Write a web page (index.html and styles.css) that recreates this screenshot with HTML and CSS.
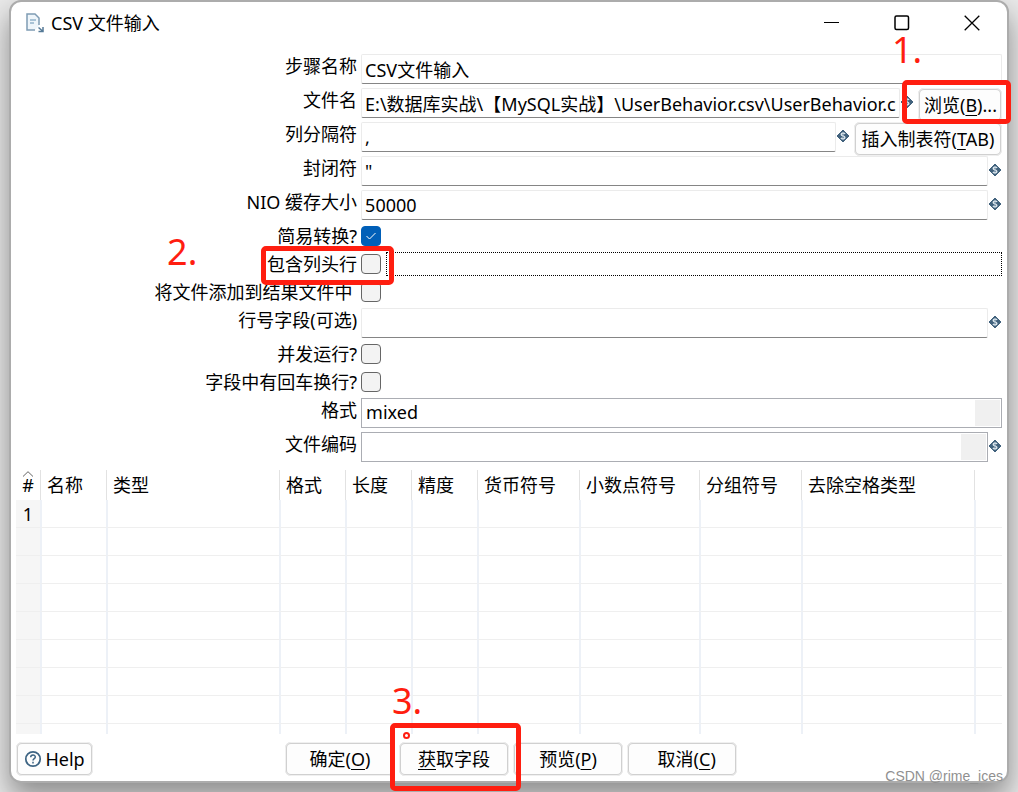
FILE: index.html
```html
<!DOCTYPE html>
<html lang="zh-CN">
<head>
    <meta charset="UTF-8">
    <meta name="viewport" content="width=device-width, initial-scale=1.0">
    <title>CSV 文件输入</title>
    <link rel="stylesheet" href="styles.css">
</head>
<body>
    <svg class="symbols" aria-hidden="true">
        <symbol id="variable" viewBox="0 0 12 12">
            <path d="M6 0 L12 6 L6 12 L0 6 Z" fill="#41627d" stroke="#41627d" stroke-width="1"/>
            <path d="M8 4 C7.400 3 4.200 2.900 4.200 4.600 C4.200 6.200 7.900 5.600 7.900 7.400 C7.900 9.100 4.600 9 4 7.900" fill="none" stroke="#dce6ed" stroke-width="1.400"/>
            <path d="M6 2 V10" stroke="#b4c6d3" stroke-width="1"/>
        </symbol>
    </svg>

    <div class="window">
        <div class="title-bar">
            <svg class="title-icon" width="18" height="20" viewBox="0 0 18 20">
                <path d="M1 1 H9 L13 5 V13 L9 17 H1 Z" fill="#eef5fa"/>
                <path d="M13 12 V5 L9 1 H1 V17 H9" fill="none" stroke="#7f9cb4" stroke-width="1.500"/>
                <path d="M4 7 H10 M4 10 H8" stroke="#a9c3d6" stroke-width="2"/>
                <path d="M12.500 14.500 L16.500 18 M17 14 V18.500 H12.500" fill="none" stroke="#557a97" stroke-width="1.500"/>
            </svg>
            <h1>CSV 文件输入</h1>
            <div class="window-controls">
                <button type="button" aria-label="最小化">
                    <svg width="16" height="16" viewBox="0 0 16 16"><path d="M0 7.500 H15"/></svg>
                </button>
                <button type="button" aria-label="最大化">
                    <svg width="16" height="16" viewBox="0 0 16 16"><rect x="1" y="1" width="13.500" height="13.500" rx="1.500" stroke-width="1.500"/></svg>
                </button>
                <button type="button" aria-label="关闭">
                    <svg width="16" height="16" viewBox="0 0 16 16"><path d="M.7 .7 L15.300 15.300 M15.300 .7 L.7 15.300" stroke-width="1.300"/></svg>
                </button>
            </div>
        </div>

        <form class="form">
            <div class="row">
                <label for="stepName">步骤名称</label>
                <div class="field">
                    <input type="text" id="stepName" value="CSV文件输入">
                </div>
            </div>
            <div class="row">
                <label for="fileName">文件名</label>
                <div class="field">
                    <input type="text" id="fileName" value="E:\数据库实战\【MySQL实战】\UserBehavior.csv\UserBehavior.csv">
                    <svg class="variable"><use href="#variable"/></svg>
                    <div class="marked">
                        <button type="button" class="button browse">浏览(<u>B</u>)...</button>
                        <span class="mark mark-browse"></span>
                        <span class="mark-number number-browse">1.</span>
                    </div>
                </div>
            </div>
            <div class="row">
                <label for="delimiter">列分隔符</label>
                <div class="field">
                    <input type="text" id="delimiter" value=",">
                    <svg class="variable"><use href="#variable"/></svg>
                    <button type="button" class="button insert-tab">插入制表符(<u>T</u>AB)</button>
                </div>
            </div>
            <div class="row">
                <label for="enclosure">封闭符</label>
                <div class="field">
                    <input type="text" id="enclosure" value="&quot;">
                    <svg class="variable"><use href="#variable"/></svg>
                </div>
            </div>
            <div class="row">
                <label for="bufferSize">NIO 缓存大小</label>
                <div class="field">
                    <input type="text" id="bufferSize" value="50000">
                    <svg class="variable"><use href="#variable"/></svg>
                </div>
            </div>
            <div class="row check-row">
                <label for="lazyConversion">简易转换?</label>
                <div class="field">
                    <input type="checkbox" id="lazyConversion" checked>
                </div>
            </div>
            <div class="row check-row">
                <label for="headerRow">包含列头行</label>
                <div class="field marked">
                    <input type="checkbox" id="headerRow">
                    <span class="focus-area"></span>
                    <span class="mark mark-header"></span>
                    <span class="mark-number number-header">2.</span>
                </div>
            </div>
            <div class="row check-row">
                <label for="addResult">将文件添加到结果文件中&nbsp;</label>
                <div class="field">
                    <input type="checkbox" id="addResult">
                </div>
            </div>
            <div class="row">
                <label for="rowNumField">行号字段(可选)</label>
                <div class="field">
                    <input type="text" id="rowNumField">
                    <svg class="variable"><use href="#variable"/></svg>
                </div>
            </div>
            <div class="row check-row">
                <label for="parallel">并发运行?</label>
                <div class="field">
                    <input type="checkbox" id="parallel">
                </div>
            </div>
            <div class="row check-row">
                <label for="newlines">字段中有回车换行?</label>
                <div class="field">
                    <input type="checkbox" id="newlines">
                </div>
            </div>
            <div class="row">
                <label for="format">格式</label>
                <div class="field">
                    <select id="format">
                        <option>mixed</option>
                        <option>DOS</option>
                        <option>Unix</option>
                    </select>
                </div>
            </div>
            <div class="row">
                <label for="encoding">文件编码</label>
                <div class="field">
                    <select id="encoding">
                        <option></option>
                        <option>UTF-8</option>
                        <option>GBK</option>
                    </select>
                    <svg class="variable"><use href="#variable"/></svg>
                </div>
            </div>
        </form>

        <table class="fields-table">
            <colgroup>
                <col class="col-index">
                <col class="col-small">
                <col class="col-large">
                <col class="col-small">
                <col class="col-small">
                <col class="col-small">
                <col class="col-medium">
                <col class="col-decimal">
                <col class="col-medium">
                <col class="col-large">
                <col>
            </colgroup>
            <thead>
                <tr>
                    <th class="index">
                        <svg class="sort" width="12" height="6" viewBox="0 0 12 6"><path d="M1 5.500 L6 .7 L11 5.500" fill="none" stroke="#666"/></svg>#</th>
                    <th>名称</th>
                    <th>类型</th>
                    <th>格式</th>
                    <th>长度</th>
                    <th>精度</th>
                    <th>货币符号</th>
                    <th>小数点符号</th>
                    <th>分组符号</th>
                    <th>去除空格类型</th>
                    <th></th>
                </tr>
            </thead>
            <tbody>
                <tr><td class="index">1</td><td></td><td></td><td></td><td></td><td></td><td></td><td></td><td></td><td></td><td></td></tr>
                <tr><td class="index"></td><td></td><td></td><td></td><td></td><td></td><td></td><td></td><td></td><td></td><td></td></tr>
                <tr><td class="index"></td><td></td><td></td><td></td><td></td><td></td><td></td><td></td><td></td><td></td><td></td></tr>
                <tr><td class="index"></td><td></td><td></td><td></td><td></td><td></td><td></td><td></td><td></td><td></td><td></td></tr>
                <tr><td class="index"></td><td></td><td></td><td></td><td></td><td></td><td></td><td></td><td></td><td></td><td></td></tr>
                <tr><td class="index"></td><td></td><td></td><td></td><td></td><td></td><td></td><td></td><td></td><td></td><td></td></tr>
                <tr><td class="index"></td><td></td><td></td><td></td><td></td><td></td><td></td><td></td><td></td><td></td><td></td></tr>
                <tr><td class="index"></td><td></td><td></td><td></td><td></td><td></td><td></td><td></td><td></td><td></td><td></td></tr>
                <tr class="last"><td class="index"></td><td></td><td></td><td></td><td></td><td></td><td></td><td></td><td></td><td></td><td></td></tr>
            </tbody>
        </table>

        <div class="footer">
            <button type="button" class="button help">
                <svg width="18" height="18" viewBox="0 0 18 18">
                    <circle cx="9" cy="9" r="7.200" fill="none" stroke="#3d6483" stroke-width="1.700"/>
                    <path d="M6.700 7.200 C6.700 4.200 11.300 4.300 11.300 7 C11.300 8.700 9 8.600 9 10.500 M9 11.800 V13.400" fill="none" stroke="#3d6483" stroke-width="1.500"/>
                </svg>
                Help
            </button>
            <div class="actions">
                <button type="button" class="button">确定(<u>O</u>)</button>
                <div class="marked">
                    <button type="button" class="button"><u>获</u>取字段</button>
                    <span class="mark mark-fields"></span>
                    <span class="mark-dot"></span>
                    <span class="mark-number number-fields">3.</span>
                </div>
                <button type="button" class="button">预览(<u>P</u>)</button>
                <button type="button" class="button">&nbsp;&nbsp;取消(<u>C</u>)</button>
            </div>
        </div>
        <span class="watermark">CSDN @rime_ices</span>
    </div>
</body>
</html>
```

FILE: styles.css
```css
* {
    box-sizing: border-box;
}
body {
    margin: 0;
    padding: 0 9px 9px;
    background-color: #e9e9e9;
    color: #000;
    font-family: "Noto Sans", "Noto Sans CJK SC", sans-serif;
    font-size: 18px;
    line-height: 24px;
    overflow: hidden;
}
input, select, button {
    font: inherit;
    color: inherit;
}
.symbols {
    display: none;
}
.window {
    position: relative;
    background-color: #fff;
    border: 2px solid #acacac;
    border-radius: 12px;
    box-shadow: 0 14px 28px rgba(0,0,0,0.4);
}

/* title bar */
.title-bar {
    display: flex;
    align-items: center;
    height: 42px;
    padding-left: 15px;
}
.title-bar h1 {
    flex: 1;
    margin: 0 0 0 7px;
    font-size: 18px;
    font-weight: normal;
}
.window-controls {
    display: flex;
}
.window-controls button {
    display: flex;
    align-items: center;
    justify-content: center;
    width: 70px;
    height: 42px;
    padding: 0;
    border: none;
    background: none;
}
.window-controls svg {
    fill: none;
    stroke: #000;
}

/* form */
.form {
    display: flex;
    flex-direction: column;
    gap: 4px;
    padding: 10px 5px 0;
}
.row {
    display: grid;
    grid-template-columns: calc(35% - 4px) 1fr;
    gap: 4px;
    height: 30px;
}
.row label {
    text-align: right;
    white-space: nowrap;
}
.check-row {
    height: 24px;
}
.field {
    display: flex;
    align-items: flex-start;
    min-width: 0;
}
.check-row .field {
    align-items: center;
}
.field input[type="text"] {
    flex: 1;
    min-width: 0;
    height: 30px;
    padding: 0 3px;
    border: 1px solid #ebebeb;
    border-bottom-color: #858585;
    border-radius: 2px;
    background-color: #fff;
}
.field input[type="checkbox"] {
    appearance: none;
    width: 20px;
    height: 20px;
    margin: 0;
    border: 1px solid #666;
    border-radius: 4px;
    background-color: #f3f3f3;
}
.field input[type="checkbox"]:checked {
    border-color: #005fb8;
    background: #005fb8 url("data:image/svg+xml,%3Csvg xmlns='http://www.w3.org/2000/svg' viewBox='0 0 18 18'%3E%3Cpath d='M4.500 9 L7.500 12 L13.500 6' fill='none' stroke='white'/%3E%3C/svg%3E");
}
.field select {
    appearance: none;
    flex: 1;
    height: 30px;
    padding: 0 30px 2px 4px;
    border: 1px solid #abadb3;
    border-radius: 0;
    background: #fff linear-gradient(#f0f0f0, #f0f0f0) no-repeat right 1px center / 25px 26px;
}
.variable {
    flex: none;
    width: 12px;
    height: 12px;
    margin: 8px 1px 0;
}
.focus-area {
    flex: 1;
    height: 24px;
    margin-left: 5px;
    border: 1px dotted #000;
}

/* buttons */
.button {
    height: 34px;
    padding: 0 4px;
    border: 2px solid #d0d0d0;
    border-radius: 6px;
    outline: 1px solid #f0f0f0;
    outline-offset: -1px;
    background-color: #fdfdfd;
    white-space: nowrap;
}
.button u {
    text-decoration-thickness: 1px;
    text-underline-offset: 3px;
}
.browse {
    width: 84px;
    margin-left: 4px;
}
.insert-tab {
    width: 148px;
    margin-left: 4px;
}

/* table of fields */
.fields-table {
    width: calc(100% - 10px);
    margin: 8px 5px 0;
    border-collapse: separate;
    border-spacing: 0;
    table-layout: fixed;
}
.col-index {
    width: 24px;
}
.col-small {
    width: 66px;
}
.col-medium {
    width: 102px;
}
.col-decimal {
    width: 120px;
}
.col-large {
    width: 173px;
}
.fields-table th {
    height: 30px;
    padding: 0 0 0 6px;
    border-left: 1px solid #e2e2e2;
    font-weight: normal;
    text-align: left;
    white-space: nowrap;
}
.fields-table td {
    height: 28px;
    padding: 0;
    border-left: 2px solid #edf1f7;
    border-bottom: 1px solid #efefef;
}
.fields-table .index {
    position: relative;
    padding: 0;
    border-left: none;
    text-align: center;
}
.fields-table td.index {
    background-color: #f6f6f6;
}
.fields-table .last td {
    height: 10px;
    border-bottom: none;
}
.sort {
    position: absolute;
    top: 1px;
    left: 6px;
}

/* footer */
.footer {
    display: grid;
    grid-template-columns: 1fr auto 1fr;
    padding: 8px 1px 5px 5px;
}
.help {
    display: flex;
    align-items: center;
    justify-content: center;
    gap: 3px;
    width: 77px;
}
.actions {
    display: flex;
    gap: 4px;
}
.actions .button {
    width: 110px;
}

/* red marks over the controls */
.marked {
    position: relative;
}
.mark {
    position: absolute;
    z-index: 2;
    border: 5px solid #ff1e10;
    border-radius: 5px;
    pointer-events: none;
}
.mark-browse {
    top: -8px;
    left: -12px;
    right: -9px;
    height: 44px;
}
.mark-header {
    top: -6px;
    left: -100px;
    width: 133px;
    height: 39px;
}
.mark-fields {
    top: -19px;
    left: -9px;
    right: -12px;
    height: 68px;
}
.mark-dot {
    position: absolute;
    top: -10px;
    left: 4px;
    width: 7px;
    height: 7px;
    border: 2px solid #ff1e10;
    border-radius: 50%;
}
.mark-number {
    position: absolute;
    z-index: 2;
    color: #ff1e10;
    font-size: 36px;
    line-height: 40px;
}
.number-browse {
    top: -58px;
    left: -22px;
}
.number-header {
    top: -20px;
    left: -194px;
}
.number-fields {
    top: -61px;
    left: -7px;
}
.watermark {
    position: absolute;
    right: 4px;
    bottom: -4px;
    color: #909090;
    font-family: "Liberation Sans", sans-serif;
    font-size: 14px;
    line-height: 18px;
}
```
